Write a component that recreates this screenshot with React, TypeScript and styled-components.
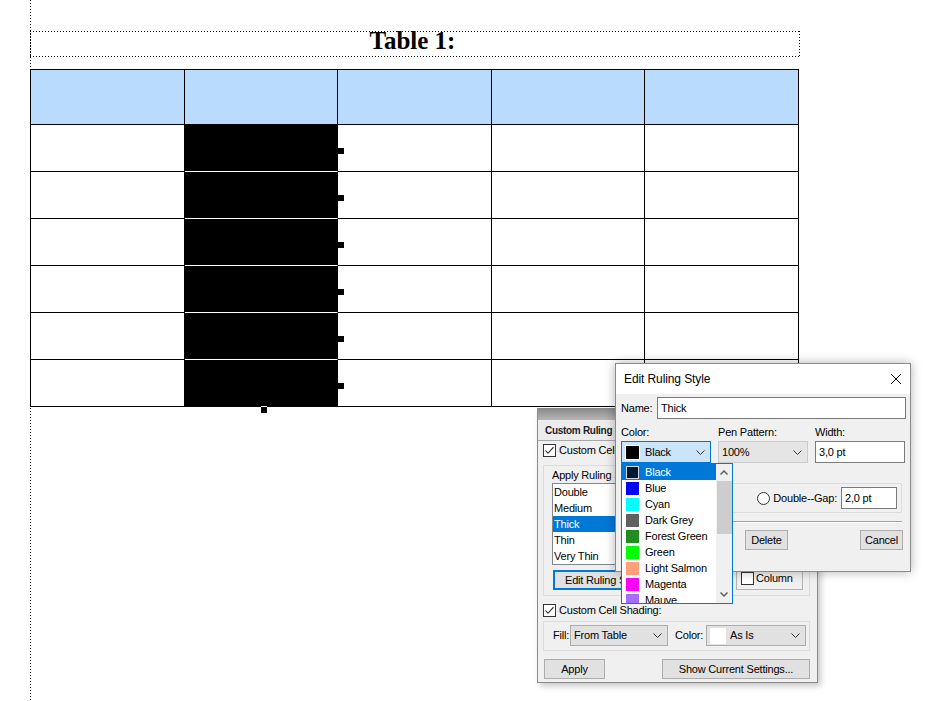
import React from 'react';
import styled, { createGlobalStyle, css } from 'styled-components';

const GlobalStyle = createGlobalStyle`
  html, body {
    margin: 0;
    padding: 0;
    background: #fff;
  }
  * {
    box-sizing: border-box;
  }
`;

const Page = styled.div`
  position: relative;
  width: 941px;
  height: 701px;
  overflow: hidden;
  background: #fff;
  font-family: "Liberation Sans", Arial, sans-serif;
`;

/* page margin guide: the dotted line on the left */
const Sheet = styled.div`
  margin-left: 30px;
  width: 770px;
  height: 701px;
  padding-top: 31px;
  background: linear-gradient(to bottom, #000 1px, transparent 1px) 0 0 / 1px 3px repeat-y;
`;

const dottedFrame = css`
  background-image:
    linear-gradient(to right, #000 1px, transparent 1px),
    linear-gradient(to right, #000 1px, transparent 1px),
    linear-gradient(to bottom, #000 1px, transparent 1px),
    linear-gradient(to bottom, #000 1px, transparent 1px);
  background-size: 3px 1px, 3px 1px, 1px 3px, 1px 3px;
  background-position: 0 0, 0 100%, 0 0, 100% 0;
  background-repeat: repeat-x, repeat-x, repeat-y, repeat-y;
`;

const TitleFrame = styled.div`
  ${dottedFrame};
  height: 26px;
  padding-right: 5px;
  display: flex;
  justify-content: center;
  align-items: flex-start;
  font-family: "Liberation Serif", "Times New Roman", serif;
  font-weight: bold;
  font-size: 25px;
  line-height: 20px;
  color: #000;
`;

const Grid = styled.div`
  position: relative;
  margin-top: 12px;
  display: grid;
  grid-template-columns: 154px 153px 154px 153px 154px;
  width: 769px;
  border-left: 1px solid #000;
  border-top: 1px solid #000;
`;

const Cell = styled.div<{ $head?: boolean; $fill?: boolean; $last?: boolean }>`
  height: ${({ $head }) => ($head ? 55 : 47)}px;
  border-right: 1px solid #000;
  border-bottom: 1px solid ${({ $fill, $last }) => ($fill && !$last ? '#fff' : '#000')};
  background: ${({ $head, $fill }) => ($head ? '#b9dcfe' : $fill ? '#000' : '#fff')};
  display: flex;
  align-items: flex-start;
`;

const Handle = styled.span`
  width: 6px;
  height: 6px;
  margin-top: 23px;
  background: #000;
`;

const BottomHandle = styled.span`
  position: absolute;
  left: 230px;
  top: 336px;
  width: 6px;
  height: 7px;
  border-top: 1px solid #fff;
  background: #000;
`;

/* ---------- dialog parts ---------- */

const Window = styled.div<{ $x: number; $y: number; $w: number; $h: number; $shadow: string }>`
  position: absolute;
  left: ${({ $x }) => $x}px;
  top: ${({ $y }) => $y}px;
  width: ${({ $w }) => $w}px;
  height: ${({ $h }) => $h}px;
  display: flex;
  flex-direction: column;
  background: #f0f0f0;
  border: 1px solid #8a8a8a;
  box-shadow: ${({ $shadow }) => $shadow};
  font-size: 11px;
  line-height: 13px;
  letter-spacing: -0.2px;
  color: #000;
`;

const Strip = styled.div`
  height: 11px;
  background: linear-gradient(#8c8c8c, #b6b6b6);
`;

const Caption = styled.div`
  height: 21px;
  padding-left: 7px;
  display: flex;
  align-items: center;
  background: #ececec;
  border-bottom: 1px solid #a8a8a8;
  font-size: 10px;
  font-weight: bold;
  letter-spacing: -0.3px;
  color: #1c1c2a;
`;

const CrBody = styled.div`
  padding: 3px 7px 0 5px;
  display: flex;
  flex-direction: column;
`;

const CheckRow = styled.div<{ $gapTop?: number }>`
  margin-top: ${({ $gapTop }) => $gapTop ?? 0}px;
  height: 13px;
  display: flex;
  align-items: center;
  gap: 3px;
  white-space: nowrap;
`;

const CheckBoxBox = styled.span`
  flex: none;
  width: 13px;
  height: 13px;
  border: 1px solid #333;
  background: #fff;
  display: flex;
  align-items: center;
  justify-content: center;
`;

const CheckBox = ({ checked }: { checked?: boolean }) => (
  <CheckBoxBox>
    {checked && (
      <svg width="11" height="11" viewBox="0 0 11 11">
        <path d="M1.5 5.5 L4 8.3 L9.5 2.2" fill="none" stroke="#222" strokeWidth="1.1" />
      </svg>
    )}
  </CheckBoxBox>
);

const RadioDot = styled.span`
  flex: none;
  width: 13px;
  height: 13px;
  border: 1px solid #333;
  border-radius: 50%;
  background: #fff;
`;

const RulingGroup = styled.div`
  margin-top: 8px;
  height: 131px;
  border: 1px solid #dcdcdc;
  padding: 3px 6px 5px 8px;
  display: flex;
`;

const LeftCol = styled.div`
  width: 122px;
  display: flex;
  flex-direction: column;
`;

const RightCol = styled.div`
  flex: 1;
  display: flex;
  flex-direction: column;
  justify-content: flex-end;
  align-items: flex-end;
`;

const GroupLabel = styled.div`
  height: 13px;
  white-space: nowrap;
`;

const ListBox = styled.div`
  margin-top: 1px;
  width: 112px;
  height: 82px;
  border: 1px solid #828790;
  background: #fff;
`;

const ListRow = styled.div<{ $selected?: boolean }>`
  height: 16px;
  line-height: 16px;
  padding-left: 1px;
  background: ${({ $selected }) => ($selected ? '#0078d7' : 'transparent')};
  color: ${({ $selected }) => ($selected ? '#fff' : '#000')};
`;

const Button = styled.div<{ $w: number; $default?: boolean }>`
  flex: none;
  width: ${({ $w }) => $w}px;
  height: 20px;
  display: flex;
  align-items: center;
  justify-content: center;
  white-space: nowrap;
  background: #e1e1e1;
  border: 1px solid ${({ $default }) => ($default ? '#0078d7' : '#adadad')};
  box-shadow: ${({ $default }) => ($default ? 'inset 0 0 0 1px #0078d7' : 'none')};
`;

const EditButton = styled(Button)`
  margin-top: 5px;
  margin-left: 1px;
`;

const ColumnFrame = styled.div`
  width: 67px;
  height: 24px;
  border: 1px solid #b4b4b4;
  padding-left: 4px;
  display: flex;
  align-items: center;
  gap: 2px;
`;

const ShadingGroup = styled.div`
  margin-top: 4px;
  height: 30px;
  border: 1px solid #dcdcdc;
  padding: 3px 3px 0 9px;
  display: flex;
  align-items: flex-start;
`;

const FieldLabel = styled.span<{ $w: number; $left?: number }>`
  flex: none;
  width: ${({ $w }) => $w}px;
  margin-left: ${({ $left }) => $left ?? 0}px;
  line-height: 21px;
  white-space: nowrap;
`;

const Select = styled.div<{ $w?: number; $h: number; $tone: 'plain' | 'focus' | 'disabled' }>`
  flex: none;
  width: ${({ $w }) => ($w ? `${$w}px` : 'auto')};
  height: ${({ $h }) => $h}px;
  display: flex;
  align-items: center;
  padding: 0 5px 0 3px;
  white-space: nowrap;
  ${({ $tone }) =>
    $tone === 'focus'
      ? css`
          background: #cce4f7;
          border: 1px solid #0078d7;
        `
      : $tone === 'disabled'
      ? css`
          background: #e5e5e5;
          border: 1px solid #cccccc;
        `
      : css`
          background: #e1e1e1;
          border: 1px solid #adadad;
        `}
`;

const ChevronSvg = styled.svg`
  margin-left: auto;
  flex: none;
`;

const Chevron = () => (
  <ChevronSvg width="9" height="5" viewBox="0 0 9 5">
    <path d="M0.5 0.5 L4.5 4.5 L8.5 0.5" fill="none" stroke="#333" strokeWidth="1" />
  </ChevronSvg>
);

const Swatch = styled.span<{ $c: string; $size: number; $ring?: string; $gap: number }>`
  flex: none;
  width: ${({ $size }) => $size}px;
  height: ${({ $size }) => $size}px;
  margin-right: ${({ $gap }) => $gap}px;
  background: ${({ $c }) => $c};
  border: ${({ $ring }) => ($ring ? `1px solid ${$ring}` : 'none')};
`;

const ButtonRow = styled.div`
  margin-top: 8px;
  padding-left: 1px;
  display: flex;
  justify-content: space-between;
`;

/* ---------- Edit Ruling Style ---------- */

const TitleBar = styled.div`
  height: 30px;
  flex: none;
  padding: 0 9px 0 8px;
  display: flex;
  align-items: center;
  justify-content: space-between;
  background: #fff;
  font-size: 12px;
  letter-spacing: -0.1px;
`;

const ErsBody = styled.div`
  padding: 3px 4px 0 5px;
  display: flex;
  flex-direction: column;
`;

const NameRow = styled.div`
  display: flex;
  align-items: center;
`;

const TextField = styled.div<{ $w?: number; $h: number }>`
  ${({ $w }) => ($w ? `width: ${$w}px; flex: none;` : 'flex: 1;')}
  height: ${({ $h }) => $h}px;
  padding-left: 3px;
  display: flex;
  align-items: center;
  background: #fff;
  border: 1px solid #7a7a7a;
  white-space: nowrap;
`;

const Columns = styled.div`
  margin-top: 7px;
  display: grid;
  grid-template-columns: 90px 90px 90px;
  column-gap: 7px;
  row-gap: 2px;
`;

const GapGroup = styled.div`
  margin-top: 20px;
  margin-right: 4px;
  height: 30px;
  border: 1px solid #dcdcdc;
  padding: 0 4px 0 6px;
  display: flex;
  align-items: center;
`;

const RadioItem = styled.div<{ $push?: boolean }>`
  display: flex;
  align-items: center;
  gap: 3px;
  margin-right: ${({ $push }) => ($push ? 'auto' : '4px')};
  white-space: nowrap;
`;

const Separator = styled.div`
  margin-top: 8px;
  margin-right: 4px;
  border-top: 1px solid #a0a0a0;
  border-bottom: 1px solid #fff;
`;

const DialogButtons = styled.div`
  margin-top: 7px;
  padding-right: 3px;
  display: flex;
`;

const DeleteButton = styled(Button)`
  margin-left: 81px;
`;

const CancelButton = styled(Button)`
  margin-left: auto;
`;

/* ---------- colour drop-down ---------- */

const DropList = styled.div`
  position: absolute;
  left: 621px;
  top: 463px;
  width: 112px;
  height: 141px;
  display: flex;
  overflow: hidden;
  background: #fff;
  border: 1px solid #0078d7;
  font-size: 11px;
  letter-spacing: -0.2px;
`;

const DropItems = styled.div`
  flex: 1;
`;

const DropItem = styled.div<{ $selected?: boolean }>`
  height: 16px;
  display: flex;
  align-items: center;
  padding-left: 4px;
  white-space: nowrap;
  background: ${({ $selected }) => ($selected ? '#0078d7' : '#fff')};
  color: ${({ $selected }) => ($selected ? '#fff' : '#000')};
`;

const ScrollBar = styled.div`
  width: 16px;
  flex: none;
  display: flex;
  flex-direction: column;
  background: #f0f0f0;
`;

const ScrollArrow = styled.div`
  height: 17px;
  flex: none;
  display: flex;
  align-items: center;
  justify-content: center;
`;

const Thumb = styled.div`
  margin: 0 0 0 1px;
  height: 53px;
  background: #cdcdcd;
`;

const Track = styled.div`
  flex: 1;
`;

const colors = [
  { name: 'Black', c: '#011a33' },
  { name: 'Blue', c: '#0000ff' },
  { name: 'Cyan', c: '#00ffff' },
  { name: 'Dark Grey', c: '#606060' },
  { name: 'Forest Green', c: '#228b22' },
  { name: 'Green', c: '#00ff00' },
  { name: 'Light Salmon', c: '#ffa07a' },
  { name: 'Magenta', c: '#ff00ff' },
  { name: 'Mauve', c: '#a66cff' },
];

const rulings = ['Double', 'Medium', 'Thick', 'Thin', 'Very Thin'];

const App: React.FC = () => {
  const rows = [0, 1, 2, 3, 4, 5];

  return (
    <Page>
      <GlobalStyle />
      <Sheet>
        <TitleFrame>Table 1:</TitleFrame>
        <Grid>
          {[0, 1, 2, 3, 4].map((c) => (
            <Cell key={`h${c}`} $head />
          ))}
          {rows.map((r) =>
            [0, 1, 2, 3, 4].map((c) => (
              <Cell key={`${r}-${c}`} $fill={c === 1} $last={r === rows.length - 1}>
                {c === 2 && <Handle />}
              </Cell>
            ))
          )}
          <BottomHandle />
        </Grid>
      </Sheet>

      <Window $x={537} $y={408} $w={281} $h={275} $shadow="3px 3px 6px rgba(0,0,0,0.22)">
        <Strip />
        <Caption>Custom Ruling &amp; Shading</Caption>
        <CrBody>
          <CheckRow>
            <CheckBox checked />
            Custom Cell Ruling &amp; Color:
          </CheckRow>
          <RulingGroup>
            <LeftCol>
              <GroupLabel>Apply Ruling Style:</GroupLabel>
              <ListBox>
                {rulings.map((r) => (
                  <ListRow key={r} $selected={r === 'Thick'}>
                    {r}
                  </ListRow>
                ))}
              </ListBox>
              <EditButton $w={110} $default>
                Edit Ruling Style...
              </EditButton>
            </LeftCol>
            <RightCol>
              <ColumnFrame>
                <CheckBox />
                Column
              </ColumnFrame>
            </RightCol>
          </RulingGroup>
          <CheckRow $gapTop={8}>
            <CheckBox checked />
            Custom Cell Shading:
          </CheckRow>
          <ShadingGroup>
            <FieldLabel $w={17}>Fill:</FieldLabel>
            <Select $w={98} $h={21} $tone="plain">
              From Table
              <Chevron />
            </Select>
            <FieldLabel $w={31} $left={7}>
              Color:
            </FieldLabel>
            <Select $w={100} $h={21} $tone="plain">
              <Swatch $c="#fff" $size={16} $gap={4} />
              As Is
              <Chevron />
            </Select>
          </ShadingGroup>
          <ButtonRow>
            <Button $w={61}>Apply</Button>
            <Button $w={148}>Show Current Settings...</Button>
          </ButtonRow>
        </CrBody>
      </Window>

      <Window $x={615} $y={363} $w={296} $h={209} $shadow="0 0 10px rgba(0,0,0,0.3)">
        <TitleBar>
          <span>Edit Ruling Style</span>
          <svg width="10" height="10" viewBox="0 0 10 10">
            <path d="M0 0 L10 10 M10 0 L0 10" stroke="#000" strokeWidth="1" />
          </svg>
        </TitleBar>
        <ErsBody>
          <NameRow>
            <FieldLabel $w={36}>Name:</FieldLabel>
            <TextField $h={22}>Thick</TextField>
          </NameRow>
          <Columns>
            <GroupLabel>Color:</GroupLabel>
            <GroupLabel>Pen Pattern:</GroupLabel>
            <GroupLabel>Width:</GroupLabel>
            <Select $h={22} $tone="focus">
              <Swatch $c="#000" $size={15} $ring="#fff" $gap={5} />
              Black
              <Chevron />
            </Select>
            <Select $h={22} $tone="disabled">
              100%
              <Chevron />
            </Select>
            <TextField $h={22}>3,0 pt</TextField>
          </Columns>
          <GapGroup>
            <RadioItem $push>
              <RadioDot />
              Single
            </RadioItem>
            <RadioItem>
              <RadioDot />
              Double--Gap:
            </RadioItem>
            <TextField $w={56} $h={22}>
              2,0 pt
            </TextField>
          </GapGroup>
          <Separator />
          <DialogButtons>
            <Button $w={43}>OK</Button>
            <DeleteButton $w={43}>Delete</DeleteButton>
            <CancelButton $w={43}>Cancel</CancelButton>
          </DialogButtons>
        </ErsBody>
      </Window>

      <DropList>
        <DropItems>
          {colors.map((c, i) => (
            <DropItem key={c.name} $selected={i === 0}>
              <Swatch $c={c.c} $size={13} $gap={6} $ring={i === 0 ? '#d8d8d8' : undefined} />
              {c.name}
            </DropItem>
          ))}
        </DropItems>
        <ScrollBar>
          <ScrollArrow>
            <svg width="8" height="5" viewBox="0 0 8 5">
              <path d="M0.5 4.5 L4 1 L7.5 4.5" fill="none" stroke="#606060" strokeWidth="1.5" />
            </svg>
          </ScrollArrow>
          <Thumb />
          <Track />
          <ScrollArrow>
            <svg width="8" height="5" viewBox="0 0 8 5">
              <path d="M0.5 0.5 L4 4 L7.5 0.5" fill="none" stroke="#606060" strokeWidth="1.5" />
            </svg>
          </ScrollArrow>
        </ScrollBar>
      </DropList>
    </Page>
  );
};

export default App;
